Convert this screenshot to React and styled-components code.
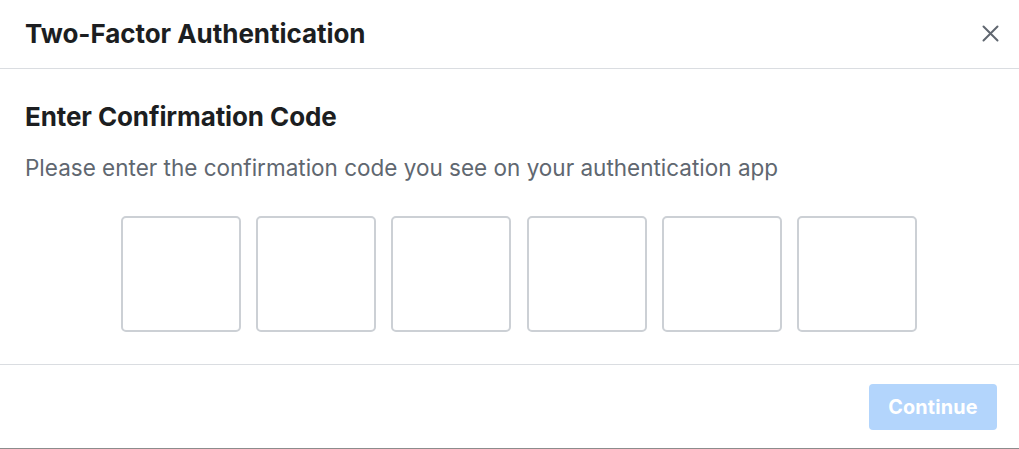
import React from "react"
import styled, { createGlobalStyle } from "styled-components"

const GlobalStyle = createGlobalStyle`
  html, body {
    margin: 0;
    padding: 0;
    background: #fff;
  }
  * {
    box-sizing: border-box;
  }
`

const Modal = styled.div`
  width: 1019px;
  height: 449px;
  display: flex;
  flex-direction: column;
  background: #fff;
  border-bottom: 1px solid #8c8c8c;
  font-family: Inter, "Noto Sans", sans-serif;
  color: #1c1e21;
`

const Header = styled.div`
  height: 69px;
  flex: none;
  display: flex;
  align-items: center;
  justify-content: space-between;
  padding: 0 15px 2px 25px;
  border-bottom: 1px solid #dadde1;
`

const Title = styled.h1`
  margin: 0;
  font-size: 26px;
  font-weight: 700;
  letter-spacing: -0.05px;
`

const CloseButton = styled.button`
  width: 28px;
  height: 28px;
  padding: 0;
  border: 0;
  background: none;
  display: grid;
  place-items: center;
  cursor: pointer;
  color: #606770;
`

const Body = styled.div`
  flex: none;
  padding: 33px 25px 32px;
  border-bottom: 1px solid #dadde1;
`

const Heading = styled.h2`
  margin: 0;
  font-size: 26px;
  line-height: 30px;
  font-weight: 700;
  letter-spacing: -0.1px;
`

const Hint = styled.p`
  margin: 23px 0 0;
  font-size: 22.5px;
  line-height: 26px;
  color: #606770;
`

const CodeRow = styled.div`
  display: flex;
  justify-content: center;
  gap: 15.2px;
  margin-top: 35px;
  padding-left: 19px;
`

const CodeBox = styled.input`
  width: 120px;
  height: 116px;
  border: 2px solid #ccd0d5;
  border-radius: 5px;
  font-family: inherit;
  font-size: 40px;
  text-align: center;
  outline: none;
`

const Footer = styled.div`
  flex: 1;
  display: flex;
  justify-content: flex-end;
  align-items: flex-start;
  padding: 19px 22px 0;
`

const PrimaryButton = styled.button`
  width: 128px;
  height: 46px;
  border: 0;
  border-radius: 4px;
  background: ${(p) => (p.disabled ? "#b3d5fc" : "#1877f2")};
  color: #fff;
  font-family: inherit;
  font-size: 19.8px;
  font-weight: 700;
  letter-spacing: 0.2px;
`

const App = () => (
  <>
    <GlobalStyle />
    <Modal>
      <Header>
        <Title>Two-Factor Authentication</Title>
        <CloseButton aria-label="Close">
          <svg width="17" height="17" viewBox="0 0 17 17">
            <path d="M1.5 1.5 L15.5 15.5 M15.5 1.5 L1.5 15.5" stroke="currentColor" strokeWidth="2" strokeLinecap="round" />
          </svg>
        </CloseButton>
      </Header>
      <Body>
        <Heading>Enter Confirmation Code</Heading>
        <Hint>Please enter the confirmation code you see on your authentication app</Hint>
        <CodeRow>
          {[0, 1, 2, 3, 4, 5].map((i) => (
            <CodeBox key={i} maxLength={1} inputMode="numeric" aria-label={`Digit ${i + 1}`} />
          ))}
        </CodeRow>
      </Body>
      <Footer>
        <PrimaryButton disabled>Continue</PrimaryButton>
      </Footer>
    </Modal>
  </>
)

export default App
